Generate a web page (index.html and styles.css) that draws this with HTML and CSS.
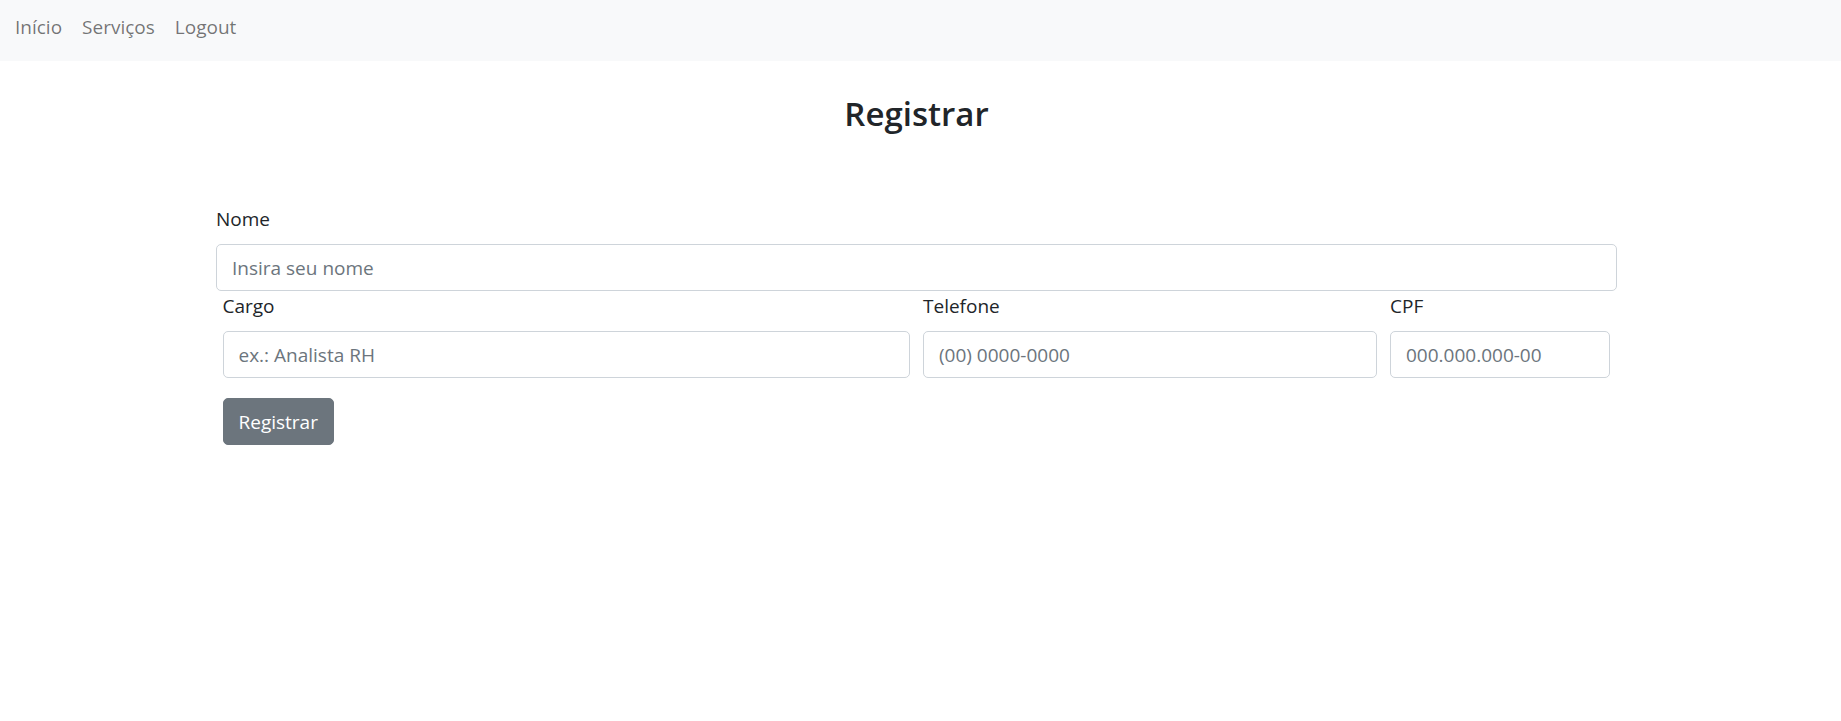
FILE: index.html
```html
<!DOCTYPE html>
<html lang="pt-BR">
<head>
<meta charset="utf-8">
<title>Registrar</title>
<link rel="stylesheet" href="styles.css">
</head>
<body>
<nav class="navbar">
  <a class="nav-link" href="#">Início</a>
  <a class="nav-link" href="#">Serviços</a>
  <a class="nav-link" href="#">Logout</a>
</nav>
<main class="content">
  <h1 class="title">Registrar</h1>
  <form class="form">
    <label class="form-label" for="nome">Nome</label>
    <input class="form-control" id="nome" type="text" placeholder="Insira seu nome">
    <div class="row">
      <div class="col col-6">
        <label class="form-label" for="cargo">Cargo</label>
        <input class="form-control" id="cargo" type="text" placeholder="ex.: Analista RH">
      </div>
      <div class="col col-4">
        <label class="form-label" for="telefone">Telefone</label>
        <input class="form-control" id="telefone" type="text" placeholder="(00) 0000-0000">
      </div>
      <div class="col col-2">
        <label class="form-label" for="cpf">CPF</label>
        <input class="form-control" id="cpf" type="text" placeholder="000.000.000-00">
      </div>
    </div>
    <div class="actions">
      <button class="btn" type="submit">Registrar</button>
    </div>
  </form>
</main>
</body>
</html>
```
FILE: styles.css
```css
* { box-sizing: border-box; }

html, body {
  margin: 0;
  padding: 0;
  background: #ffffff;
  color: #212529;
  font-family: "Open Sans", "Noto Sans", "Liberation Sans", sans-serif;
  font-size: 19px;
  line-height: 30px;
}

.navbar {
  height: 61px;
  background: #f8f9fa;
  display: flex;
  align-items: flex-start;
  padding: 12px 0 0 15px;
  gap: 20px;
}

.nav-link {
  color: rgba(0, 0, 0, 0.55);
  text-decoration: none;
}

.content {
  width: 1401px;
  margin-left: 216px;
}

.title {
  margin: 29px 0 66px;
  text-align: center;
  font-size: 33px;
  line-height: 48px;
  font-weight: 600;
  color: #212529;
}

.form-label {
  display: block;
  margin-bottom: 10px;
}

.form-control {
  display: block;
  width: 100%;
  height: 47px;
  padding: 0 15px;
  border: 1px solid #ced4da;
  border-radius: 5px;
  font-family: inherit;
  font-size: 19px;
  color: #212529;
  background: #fff;
}

.form-control::placeholder {
  color: #6c757d;
  opacity: 1;
}

.row {
  display: flex;
}

.col {
  padding: 0 6.5px;
}

.col-6 { width: 50%; }
.col-4 { width: 33.3333%; }
.col-2 { width: 16.6667%; }

.actions {
  padding: 20px 6.5px 0;
}

.btn {
  height: 47px;
  padding: 0 15px;
  border: 1px solid #6c757d;
  border-radius: 5px;
  background: #6c757d;
  color: #ffffff;
  font-family: inherit;
  font-size: 19px;
  cursor: pointer;
}
```
